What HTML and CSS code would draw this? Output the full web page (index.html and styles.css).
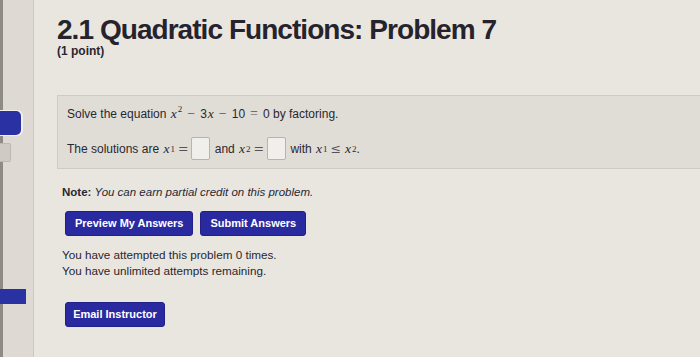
FILE: index.html
```html
<!DOCTYPE html>
<html>
<head>
<meta charset="utf-8">
<link rel="stylesheet" href="styles.css">
</head>
<body>
<div class="page">
  <aside class="sidebar">
    <div class="tab tab-blue"></div>
    <div class="tab tab-grey"></div>
    <div class="tab tab-bar"></div>
  </aside>
  <main class="main">
    <h1 class="title">2.1 Quadratic Functions: Problem 7</h1>
    <div class="points">(1 point)</div>
    <section class="problem">
      <p class="line1">Solve the equation <span class="m">x</span><sup class="m-sup">2</sup><span class="op">−</span>3<span class="m">x</span><span class="op">−</span>10<span class="op">=</span>0 by factoring.</p>
      <p class="line2">The solutions are <span class="m">x</span><sub class="m-sub">1</sub><span class="op">=</span><span class="ans"></span> and <span class="m">x</span><sub class="m-sub">2</sub><span class="op">=</span><span class="ans"></span> with <span class="m">x</span><sub class="m-sub">1</sub><span class="op">≤</span><span class="m">x</span><sub class="m-sub">2</sub>.</p>
    </section>
    <p class="note"><b>Note:</b> <i>You can earn partial credit on this problem.</i></p>
    <div class="buttons">
      <button class="btn">Preview My Answers</button>
      <button class="btn">Submit Answers</button>
    </div>
    <p class="attempts">You have attempted this problem 0 times.<br>You have unlimited attempts remaining.</p>
    <button class="btn email">Email Instructor</button>
  </main>
</div>
</body>
</html>
```
FILE: styles.css
```css
html, body {
  margin: 0;
  padding: 0;
  width: 700px;
  height: 357px;
  overflow: hidden;
}
body {
  background: #e9e6e0;
  font-family: "Liberation Sans", Arial, sans-serif;
  color: #2a2730;
}
.page {
  display: flex;
  height: 357px;
}
.sidebar {
  width: 30px;
  flex: none;
  background: #dedad3;
  border-left: 3px solid #8e8a84;
  border-right: 1px solid #cbc7c0;
  display: flex;
  flex-direction: column;
  align-items: flex-start;
}
.tab { margin-left: -3px; }
.tab-blue {
  width: 21px;
  height: 24px;
  margin-top: 111px;
  background: #2a31a3;
  border-radius: 0 5px 5px 0;
  box-shadow: 1px 0 0 1px #f2f0ec;
}
.tab-grey {
  width: 10px;
  height: 17px;
  margin-top: 8px;
  background: #cfcbc4;
  border: 1px solid #bdb9b2;
  border-left: none;
  border-radius: 0 2px 2px 0;
}
.tab-bar {
  width: 26px;
  height: 15px;
  margin-top: 127px;
  background: #2a31a3;
}
.main {
  flex: 1;
  padding-left: 23px;
  min-width: 0;
}
.title {
  margin: 14px 0 0;
  font-size: 28px;
  line-height: 32px;
  font-weight: bold;
  color: #26232c;
  letter-spacing: -0.95px;
}
.points {
  font-size: 12px;
  font-weight: bold;
  margin-top: -2px;
  line-height: 14px;
}
.problem {
  margin-top: 37px;
  margin-right: -10px;
  background: #e0ddd6;
  border: 1px solid #cfcbc4;
  padding: 0 0 0 9px;
  height: 72px;
  font-size: 12px;
}
.problem p { margin: 0; }
.line1 { padding-top: 10px; line-height: 16px; }
.line2 { margin-top: 15px !important; line-height: 22px; display: flex; align-items: center; white-space: pre; }
.m {
  font-family: "Liberation Serif", "Times New Roman", serif;
  font-style: italic;
  font-size: 13.5px;
  margin-left: 1px;
}
.m-sup { font-family: "Liberation Serif", serif; font-size: 9px; vertical-align: 6px; line-height: 0; margin-left: 1px; }
.m-sub { font-family: "Liberation Serif", serif; font-size: 9px; vertical-align: -3px; line-height: 0; margin-left: 1px; }
.op {
  font-family: "DejaVu Serif", serif;
  font-size: 12.5px;
  margin: 0 3px;
  color: #55525a;
}
.line1 .op { font-family: "Liberation Serif", serif; font-size: 14px; margin: 0 5px; }
.ans {
  display: inline-block;
  width: 17px;
  height: 21px;
  background: #f1efeb;
  border: 1px solid #b8b4ad;
  border-radius: 2px;
  margin-right: 1px;
}
.note {
  margin: 15px 0 0 5px;
  font-size: 11.5px;
  line-height: 16px;
}
.buttons {
  display: flex;
  gap: 7px;
  margin: 11px 0 0 8px;
}
.btn {
  font-family: "Liberation Sans", Arial, sans-serif;
  font-size: 11px;
  font-weight: bold;
  color: #fff;
  background: #2a2aa0;
  border: 1px solid #20208a;
  border-radius: 3px;
  height: 25px;
  padding: 0 9px;
  line-height: 23px;
}
.attempts {
  margin: 11px 0 0 5px;
  font-size: 11.7px;
  line-height: 16px;
}
.email {
  margin: 23px 0 0 8px;
  width: 100px;
  padding: 0;
}
```
